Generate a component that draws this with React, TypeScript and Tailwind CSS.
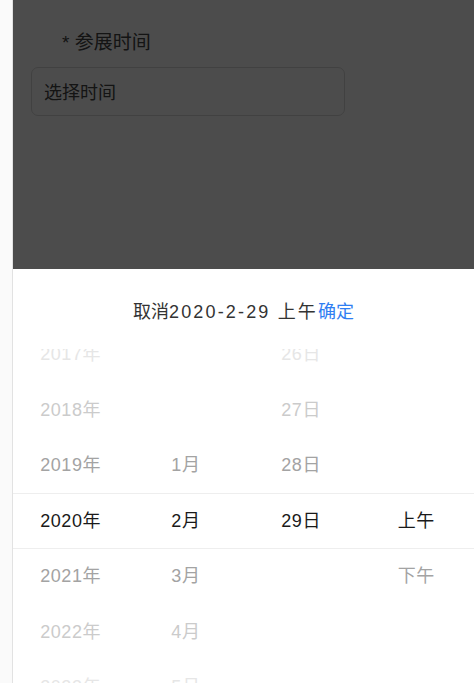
const font = { fontFamily: '"Liberation Sans", "Noto Sans CJK SC", sans-serif' };

type Cell = { label: string; tone: number };

// tone: 0 selected, 1..3 distance from the selected row
const toneClass = ["text-[#1a1a1a]", "text-[#a3a3a3]", "text-[#cbcbcb]", "text-[#e6e6e6]"];

const rowsAt = (labels: string[]): Cell[] =>
	labels.map((label, i) => ({ label, tone: Math.abs(i - 3) }));

const columns: Cell[][] = [
	rowsAt(["2017年", "2018年", "2019年", "2020年", "2021年", "2022年", "2023年"]),
	rowsAt(["", "", "1月", "2月", "3月", "4月", "5月"]),
	rowsAt(["26日", "27日", "28日", "29日", "", "", ""]),
	rowsAt(["", "", "", "上午", "下午", "", ""]),
];

function WheelColumn({ cells }: { cells: Cell[] }) {
	return (
		<div className="flex-1 flex flex-col mt-[-22px]">
			{cells.map((cell, i) => (
				<div
					key={i}
					className={`h-[55.5px] shrink-0 flex items-center justify-center text-[18px] tracking-[0.03em] ${toneClass[cell.tone]}`}
				>
					{cell.label}
				</div>
			))}
		</div>
	);
}

export default function App() {
	return (
		<div className="flex h-[683px] w-full overflow-hidden bg-white" style={font}>
			<div className="w-[13px] shrink-0 bg-[#fafafa] border-r border-[#e2e2e2]" />

			<div className="relative flex-1 bg-white">
				<div className="pt-[30px] pl-[18px]">
					<div className="pl-[31px] text-[19px] leading-[25px] text-[#444]">
						* 参展时间
					</div>
					<div className="mt-[12px] w-[314px] h-[49px] rounded-[7px] border border-[#dadada] flex items-center pl-[12px] pt-[3px] text-[18px] text-[#444]">
						选择时间
					</div>
				</div>

				<div className="absolute inset-0 bg-black/70" />

				<div className="absolute left-0 right-0 bottom-0 h-[414px] bg-white flex flex-col">
					<div className="h-[80px] shrink-0 flex items-center justify-center pt-[6px] text-[18px] text-[#333]">
						<span>取消</span>
						<span className="tracking-[0.12em]">2020-2-29 上午</span>
						<span className="text-[#2f7ef2]">确定</span>
					</div>

					<div className="relative flex-1 overflow-hidden">
						<div className="flex">
							{columns.map((cells, i) => (
								<WheelColumn key={i} cells={cells} />
							))}
						</div>
						<div className="absolute left-0 right-0 top-[144px] h-[55.5px] border-y border-[#eeeeee] pointer-events-none" />
					</div>
				</div>
			</div>
		</div>
	);
}
